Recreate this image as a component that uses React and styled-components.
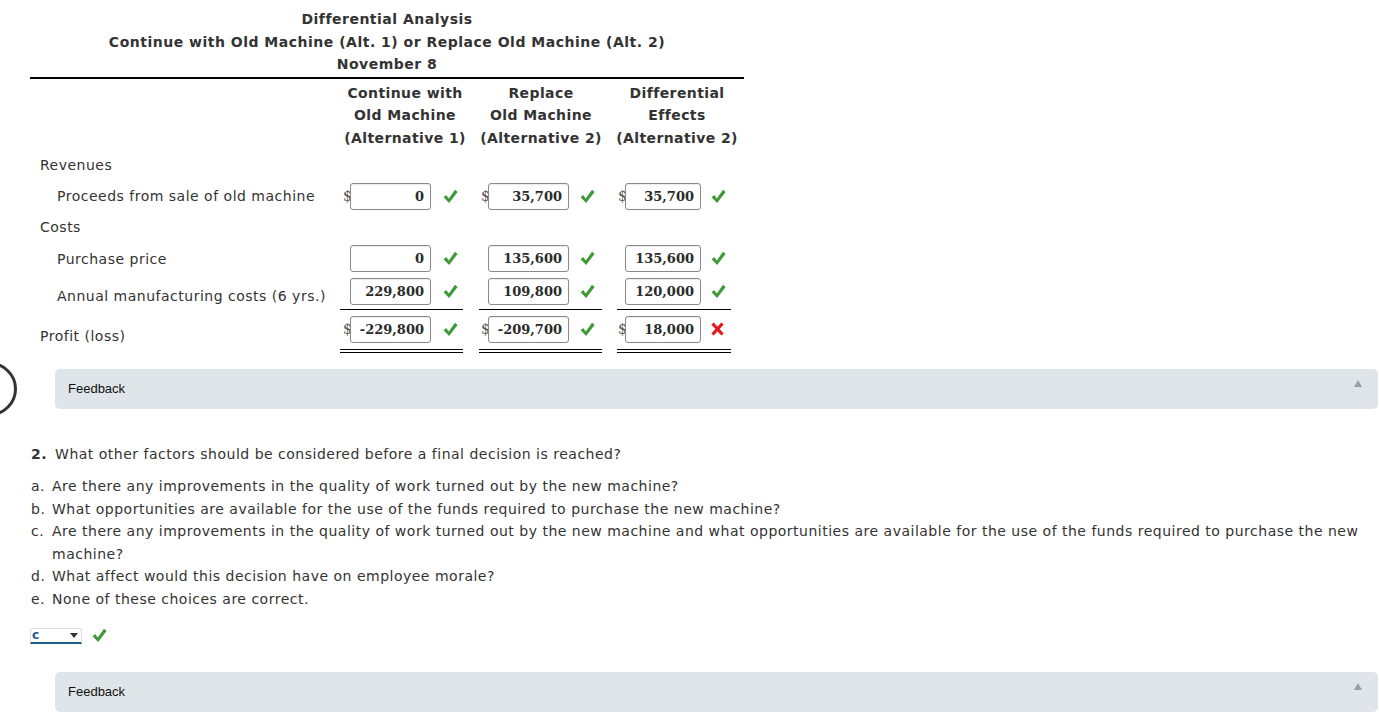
import React from 'react';
import styled, { createGlobalStyle } from 'styled-components';

const GlobalStyle = createGlobalStyle`
  body {
    margin: 0;
    background: #fff;
    font-family: "DejaVu Sans", Verdana, sans-serif;
    font-size: 14px;
    letter-spacing: 0.5px;
    color: #333;
  }
`;

const Page = styled.div`
  width: 1379px;
  height: 716px;
  overflow: hidden;
  padding-top: 8px;
  box-sizing: border-box;
`;

const Analysis = styled.div`
  width: 714px;
  margin-left: 30px;
`;

const Title = styled.div`
  text-align: center;
  font-weight: bold;
  line-height: 22.5px;
  padding-bottom: 1px;
  border-bottom: 2px solid #000;
`;

const Grid = styled.div`
  display: grid;
  grid-template-columns: 308px 134px 138px 134px;
`;

const HeadCell = styled.div`
  grid-column: ${p => p.col};
  text-align: center;
  font-weight: bold;
  line-height: 22.5px;
  padding-top: 3px;
  height: 71px;
  box-sizing: border-box;
  letter-spacing: 0.4px;
`;

const Label = styled.div`
  grid-column: 1;
  display: flex;
  align-items: center;
  padding-left: ${p => (p.indent ? 27 : 10)}px;
  height: ${p => p.h}px;
  padding-top: ${p => p.shift || 0}px;
  box-sizing: border-box;
  white-space: nowrap;
`;

const ValueCell = styled.div`
  display: flex;
  align-items: center;
  height: ${p => p.h}px;
  box-sizing: border-box;
`;

const TotalCell = styled.div`
  margin-left: ${p => p.ruleLeft}px;
  width: ${p => p.ruleWidth}px;
  border-top: 1px solid #000;
  border-bottom: 4px double #000;
  padding: 6px 0 6px;
  display: flex;
  align-items: center;
`;

const Dollar = styled.span`
  font-family: "DejaVu Serif", Georgia, serif;
  font-size: 14px;
  letter-spacing: 0;
  color: #555;
  width: 7px;
  visibility: ${p => (p.show ? 'visible' : 'hidden')};
`;

const AmountBox = styled.div`
  width: ${p => p.w}px;
  height: 27px;
  box-sizing: border-box;
  border: 1px solid #8a8a8a;
  border-radius: 3px;
  box-shadow: inset 0 1px 1px rgba(0, 0, 0, 0.08);
  display: flex;
  align-items: center;
  justify-content: flex-end;
  padding-right: 6px;
  font-family: "DejaVu Serif", Georgia, serif;
  font-weight: bold;
  font-size: 13px;
  letter-spacing: 0;
  color: #2b2b2b;
`;

const Mark = styled.span`
  display: inline-flex;
  margin-left: ${p => p.gap}px;
`;

const Check = ({ gap = 12 }) => (
  <Mark gap={gap}>
    <svg width="15" height="15" viewBox="0 0 15 15">
      <path d="M0.6 8.2 L3.2 6 L5.8 9.4 L12 0.8 L14.6 2.9 L6.1 14 Z" fill="#3d9a36" />
    </svg>
  </Mark>
);

const Cross = ({ gap = 10 }) => (
  <Mark gap={gap}>
    <svg width="13" height="14" viewBox="0 0 13 14">
      <path d="M1.5 1.5 L11.5 12.5 M11.5 1.5 L1.5 12.5" stroke="#e8141b" strokeWidth="3.2" />
    </svg>
  </Mark>
);

const cols = [
  { pad: 5, box: 81, ruleLeft: 2, ruleWidth: 123, gap: 12 },
  { pad: 9, box: 81, ruleLeft: 7, ruleWidth: 123, gap: 11 },
  { pad: 8, box: 76, ruleLeft: 7, ruleWidth: 114, gap: 10 },
];

const Amount = ({ col, value, dollar, wrong }) => (
  <>
    <Dollar show={dollar}>$</Dollar>
    <AmountBox w={cols[col].box}>{value}</AmountBox>
    {wrong ? <Cross gap={cols[col].gap} /> : <Check gap={cols[col].gap} />}
  </>
);

const Row = ({ label, h, shift, values, dollar }) => (
  <>
    <Label indent h={h} shift={shift}>{label}</Label>
    {values.map((v, i) => (
      <ValueCell key={i} h={h} style={{ paddingLeft: cols[i].pad }}>
        <Amount col={i} value={v} dollar={dollar} />
      </ValueCell>
    ))}
  </>
);

const FeedbackRow = styled.div`
  display: flex;
  align-items: center;
  margin-top: ${p => p.top}px;
`;

const Ring = styled.div`
  width: 48px;
  height: 48px;
  flex-shrink: 0;
  border: 3px solid #333;
  border-radius: 50%;
  margin-left: -37px;
  margin-right: 38px;
  visibility: ${p => (p.show ? 'visible' : 'hidden')};
`;

const FeedbackBar = styled.div`
  flex: 1;
  height: 40px;
  margin-right: 1px;
  background: #dfe5e9;
  border-radius: 5px;
  display: flex;
  align-items: center;
  justify-content: space-between;
  padding: 0 16px 0 13px;
  font-family: "Liberation Sans", Arial, sans-serif;
  font-size: 13px;
  letter-spacing: 0;
  color: #111;
`;

const Caret = styled.span`
  width: 0;
  height: 0;
  border-left: 4.5px solid transparent;
  border-right: 4.5px solid transparent;
  border-bottom: 7px solid #9a9fa3;
  margin-top: -10px;
`;

const Question = styled.div`
  margin: 27px 0 0 31px;
  line-height: 22.6px;
`;

const QNum = styled.b`
  margin-right: 8px;
`;

const Options = styled.div`
  margin-top: 10px;
`;

const Option = styled.div`
  display: flex;
  padding-right: 10px;
`;

const OptKey = styled.span`
  width: 21px;
  flex-shrink: 0;
`;

const Answer = styled.div`
  display: flex;
  align-items: center;
  margin: 17px 0 0 30px;
`;

const Select = styled.div`
  width: 52px;
  height: 16px;
  box-sizing: border-box;
  border: 1px solid #ddd;
  border-bottom: 2px solid #1d5c8c;
  border-radius: 3px 3px 0 0;
  display: flex;
  align-items: center;
  justify-content: space-between;
  padding: 0 3px 0 1px;
  color: #1d5c8c;
  font-weight: bold;
  font-size: 12px;
  line-height: 1;
`;

const SelectArrow = styled.span`
  width: 0;
  height: 0;
  border-left: 4px solid transparent;
  border-right: 4px solid transparent;
  border-top: 5px solid #333;
`;

const options = [
  ['a.', 'Are there any improvements in the quality of work turned out by the new machine?'],
  ['b.', 'What opportunities are available for the use of the funds required to purchase the new machine?'],
  ['c.', 'Are there any improvements in the quality of work turned out by the new machine and what opportunities are available for the use of the funds required to purchase the new machine?'],
  ['d.', 'What affect would this decision have on employee morale?'],
  ['e.', 'None of these choices are correct.'],
];

export default function App() {
  return (
    <Page>
      <GlobalStyle />
      <Analysis>
        <Title>
          <div>Differential Analysis</div>
          <div>Continue with Old Machine (Alt. 1) or Replace Old Machine (Alt. 2)</div>
          <div>November 8</div>
        </Title>
        <Grid>
          <HeadCell col={2}>Continue with<br />Old Machine<br />(Alternative 1)</HeadCell>
          <HeadCell col={3}>Replace<br />Old Machine<br />(Alternative 2)</HeadCell>
          <HeadCell col={4}>Differential<br />Effects<br />(Alternative 2)</HeadCell>

          <Label h={31} style={{ gridColumn: '1 / span 4' }}>Revenues</Label>
          <Row label="Proceeds from sale of old machine" h={31} values={['0', '35,700', '35,700']} dollar />
          <Label h={31} style={{ gridColumn: '1 / span 4' }}>Costs</Label>
          <Row label="Purchase price" h={32} values={['0', '135,600', '135,600']} />
          <Row label="Annual manufacturing costs (6 yrs.)" h={34} shift={8} values={['229,800', '109,800', '120,000']} />

          <Label h={44} shift={10}>Profit (loss)</Label>
          {['-229,800', '-209,700', '18,000'].map((v, i) => (
            <TotalCell key={i} ruleLeft={cols[i].ruleLeft} ruleWidth={cols[i].ruleWidth}>
              <span style={{ width: cols[i].pad - cols[i].ruleLeft }} />
              <Amount col={i} value={v} dollar wrong={i === 2} />
            </TotalCell>
          ))}
        </Grid>
      </Analysis>

      <FeedbackRow top={9}>
        <Ring show />
        <FeedbackBar>Feedback<Caret /></FeedbackBar>
      </FeedbackRow>

      <Question>
        <div><QNum>2.</QNum>What other factors should be considered before a final decision is reached?</div>
        <Options>
          {options.map(([k, t]) => (
            <Option key={k}><OptKey>{k}</OptKey><span>{t}</span></Option>
          ))}
        </Options>
      </Question>

      <Answer>
        <Select>c<SelectArrow /></Select>
        <Check gap={10} />
      </Answer>

      <FeedbackRow top={21}>
        <Ring />
        <FeedbackBar>Feedback<Caret /></FeedbackBar>
      </FeedbackRow>
    </Page>
  );
}
